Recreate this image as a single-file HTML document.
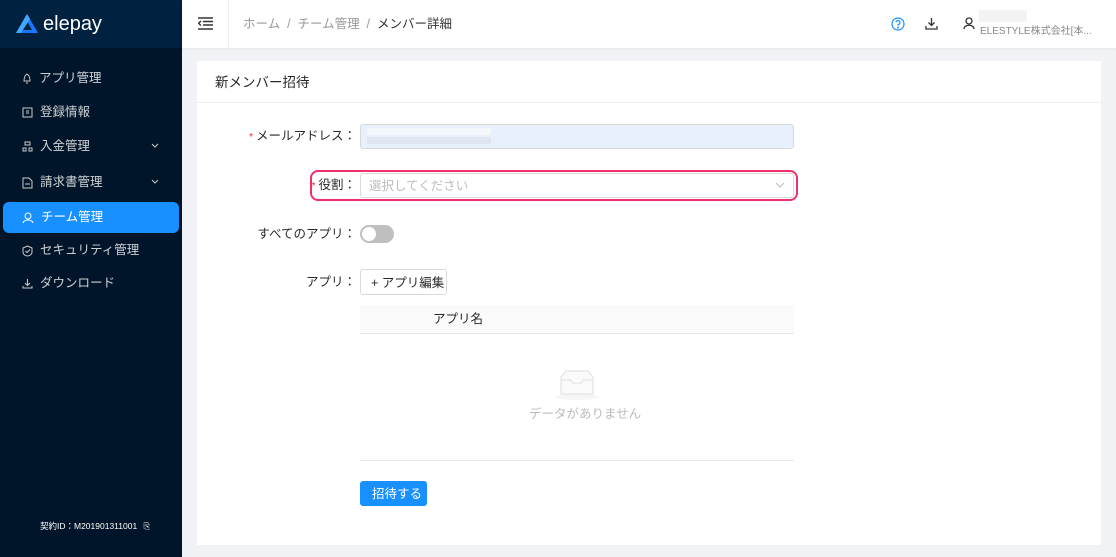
<!DOCTYPE html>
<html><head><meta charset="utf-8"><style>
*{box-sizing:border-box;margin:0;padding:0}
body{width:1116px;height:557px;overflow:hidden;font-family:"Liberation Sans","Noto Sans CJK JP",sans-serif;background:#f0f2f5;position:relative;font-size:12px;line-height:1.3;color:rgba(0,0,0,.85)}
.side{position:absolute;left:0;top:0;width:182px;height:557px;background:#001529}
.logo{height:48px;background:#002140;display:flex;align-items:center;padding-left:15px;color:#fff;font-size:20px}
.menu{position:absolute;left:0;top:62px;width:182px}
.mi{height:33px;display:flex;align-items:center;padding-left:22px;color:rgba(255,255,255,.8);font-size:12.5px;position:relative}
.mi svg{margin-right:7px}
.mi.act{background:#1890ff;color:#fff;margin:0 3px;border-radius:6px;padding-left:19px;height:31px}
.arr{position:absolute;right:16px;top:13px}
.hdr{position:absolute;left:182px;top:0;right:0;height:48px;background:#fff;box-shadow:0 1px 3px rgba(0,0,0,.06)}
.card{position:absolute;left:197px;top:61px;width:904px;height:484px;background:#fff}
.ch{height:42px;border-bottom:1px solid #eee;padding:13px 0 0 18px;font-size:13.5px}
.lab{position:absolute;right:calc(1116px - 356px);font-size:12.5px;text-align:right;white-space:nowrap;z-index:2}
.req{color:#f5222d;font-size:10px;margin-right:3px}
</style></head><body>
<div class="side">
 <div class="logo"><svg width="24" height="22" viewBox="0 0 24 22"><path d="M12 1L23 20H1z" fill="#1677ff"/><path d="M12 8L17 17H7z" fill="#002140"/><path d="M1 20L12 1l3 5L6 20z" fill="#40a9ff"/></svg><span style="margin-left:4px">elepay</span></div>
 <div class="menu">
  <div class="mi"><svg width="10" height="12" viewBox="0 0 10 12" fill="none" stroke="#ccc"><path d="M5 1C2 3 2 7 2 8h6c0-1 0-5-3-7zM4 10h2"/></svg>アプリ管理</div>
  <div class="mi" style="margin-top:1px"><svg width="11" height="11" fill="none" stroke="#ccc"><rect x="1" y="1" width="9" height="9"/><path d="M4 4h3M4 6h3"/></svg>登録情報</div>
  <div class="mi" style="margin-top:1px"><svg width="11" height="11" fill="none" stroke="#ccc"><rect x="3" y="1" width="5" height="3"/><rect x="1" y="7" width="3" height="3"/><rect x="7" y="7" width="3" height="3"/></svg>入金管理<svg class="arr" width="8" height="6" fill="none" stroke="#ccc"><path d="M1 1l3 3 3-3"/></svg></div>
  <div class="mi" style="margin-top:3px"><svg width="11" height="12" fill="none" stroke="#ccc"><path d="M1 1h6l3 3v7H1z"/><path d="M3 7h5"/></svg>請求書管理<svg class="arr" width="8" height="6" fill="none" stroke="#ccc"><path d="M1 1l3 3 3-3"/></svg></div>
  <div class="mi act" style="margin-top:3px"><svg width="12" height="12" fill="none" stroke="#fff"><circle cx="6" cy="4" r="3"/><path d="M1 11c1-4 9-4 10 0"/></svg>チーム管理</div>
  <div class="mi" style="margin-top:1px"><svg width="11" height="12" fill="none" stroke="#ccc"><path d="M5.5 1L10 3v4c0 2-2 4-4.5 4S1 9 1 7V3z"/><path d="M3.5 6l1.5 1.5 3-3"/></svg>セキュリティ管理</div>
  <div class="mi"><svg width="11" height="11" fill="none" stroke="#ccc"><path d="M5.5 1v6M3 5l2.5 2.5L8 5M1 8v2h9V8"/></svg>ダウンロード</div>
 </div>
 <div style="position:absolute;top:521px;left:40px;color:#fff;font-size:8.5px">契約ID：M201901311001 <span style="margin-left:4px">⎘</span></div>
</div>
<div class="hdr">
 <svg style="position:absolute;left:16px;top:17px" width="15" height="13" fill="none" stroke="#333" stroke-width="1.4"><path d="M0 1h15M5 4.5h10M5 8h10M0 12h15M3 4L0.5 6.3 3 8.5"/></svg>
 <div style="position:absolute;left:46px;top:0;width:1px;height:48px;background:#f0f0f0"></div>
 <div style="position:absolute;left:61px;top:16px;font-size:12.5px;color:#999">ホーム &nbsp;/ &nbsp;チーム管理 &nbsp;/ &nbsp;<span style="color:#333">メンバー詳細</span></div>
 <svg style="position:absolute;left:709px;top:17px" width="14" height="14" fill="none" stroke="#1890ff" stroke-width="1.2"><circle cx="7" cy="7" r="6"/><path d="M5 5.5a2 2 0 1 1 2 2v1"/><circle cx="7" cy="10.5" r=".4" fill="#1890ff"/></svg>
 <svg style="position:absolute;left:743px;top:17px" width="13" height="13" fill="none" stroke="#333" stroke-width="1.3"><path d="M6.5 1v7M3.5 5.5l3 3 3-3M1 9v3h11V9"/></svg>
 <svg style="position:absolute;left:781px;top:17px" width="12" height="13" fill="none" stroke="#333" stroke-width="1.3"><circle cx="6" cy="4" r="3"/><path d="M1 12c0-5 10-5 10 0"/></svg>
 <div style="position:absolute;left:797px;top:10px;width:48px;height:12px;background:#f3f3f3"></div>
 <div style="position:absolute;left:798px;top:25px;font-size:10px;color:#888">ELESTYLE株式会社[本...</div>
</div>
<div class="card"><div class="ch">新メンバー招待</div></div>
<div class="lab" style="top:128px"><span class="req">*</span>メールアドレス：</div>
<div style="position:absolute;left:360px;top:124px;width:434px;height:25px;background:#e8f0fe;border:1px solid #d9d9d9;border-radius:3px"><div style="position:absolute;left:6px;top:3px;width:124px;height:7px;background:#f4f7fc"></div><div style="position:absolute;left:6px;top:12px;width:124px;height:7px;background:#dfe6f2"></div></div>
<div style="position:absolute;left:310px;top:170px;width:488px;height:31px;border:2px solid #f0306a;border-radius:8px"></div>
<div class="lab" style="top:177px"><span class="req">*</span>役割：</div>
<div style="position:absolute;left:360px;top:173px;width:434px;height:25px;border:1px solid #d9d9d9;border-radius:3px;font-size:12.5px;color:#bbb;padding:4px 8px">選択してください<svg style="position:absolute;right:8px;top:8px" width="10" height="6" fill="none" stroke="#bbb"><path d="M1 1l4 4 4-4"/></svg></div>
<div class="lab" style="top:226px">すべてのアプリ：</div>
<div style="position:absolute;left:360px;top:225px;width:34px;height:18px;border-radius:9px;background:#bfbfbf"><div style="position:absolute;left:2px;top:2px;width:14px;height:14px;border-radius:50%;background:#fff"></div></div>
<div class="lab" style="top:274px">アプリ：</div>
<div style="position:absolute;left:360px;top:269px;width:87px;height:26px;border:1px solid #d9d9d9;border-radius:3px;font-size:12.5px;padding:5px 0 0 10px;white-space:nowrap">+ アプリ編集</div>
<div style="position:absolute;left:360px;top:305px;width:434px;height:29px;background:#fafafa;border-bottom:1px solid #e8e8e8;font-size:12.5px;padding:6px 0 0 73px">アプリ名</div>
<svg style="position:absolute;left:553px;top:369px" width="48" height="32" fill="none" stroke="#ddd"><ellipse cx="24" cy="28" rx="22" ry="3" fill="#f5f5f5" stroke="none"/><path d="M8 8l5-6h22l5 6v17H8zM8 11h10l2 3h8l2-3h10" fill="#fafafa"/></svg>
<div style="position:absolute;left:529px;top:406px;font-size:12.5px;color:#bbb">データがありません</div>
<div style="position:absolute;left:360px;top:460px;width:434px;height:1px;background:#e8e8e8"></div>
<div style="position:absolute;left:360px;top:481px;width:67px;height:25px;background:#1890ff;border-radius:3px;color:#fff;font-size:12.5px;padding:5px 0 0 12px;white-space:nowrap">招待する</div>
</body></html>
